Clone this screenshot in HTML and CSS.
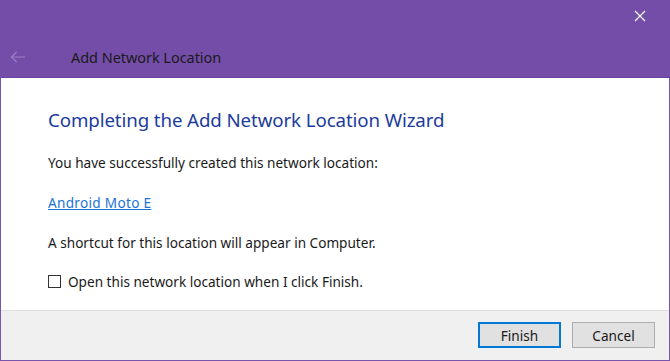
FILE: index.html
```html
<!DOCTYPE html>
<html>
<head>
<meta charset="utf-8">
<link rel="stylesheet" href="styles.css">
</head>
<body>
<div class="window">
  <header class="titlebar">
    <div class="topline">
      <svg class="close" width="12" height="12" viewBox="0 0 12 12"><path d="M1 1 L11 11 M11 1 L1 11" stroke="#fff" stroke-width="1.2" fill="none"/></svg>
    </div>
    <div class="navline">
      <svg class="back" width="16" height="12" viewBox="0 0 16 12"><path d="M15 6 H1.5 M6.5 1 L1.5 6 L6.5 11" stroke="#9a7fc6" stroke-width="1.2" fill="none"/></svg>
      <span class="title">Add Network Location</span>
    </div>
  </header>
  <main class="content">
    <h1 class="heading">Completing the Add Network Location Wizard</h1>
    <p class="text first">You have successfully created this network location:</p>
    <p class="text"><a class="link" href="#">Android Moto E</a></p>
    <p class="text">A shortcut for this location will appear in Computer.</p>
    <label class="check"><span class="box"></span><span>Open this network location when I click Finish.</span></label>
  </main>
  <footer class="footer">
    <button class="btn primary">Finish</button>
    <button class="btn">Cancel</button>
  </footer>
</div>
</body>
</html>
```
FILE: styles.css
```css
html, body { margin: 0; padding: 0; }
body { width: 670px; height: 361px; overflow: hidden; font-family: "Noto Sans", "Open Sans", sans-serif; }
.window {
  width: 670px; height: 361px; box-sizing: border-box;
  border: 1px solid #7a55ae; border-top: none;
  display: flex; flex-direction: column; background: #fff;
}
.titlebar { height: 77px; background: #744da9; border-bottom: 1px solid #6a45a0; margin: 0 -1px; display: flex; flex-direction: column; }
.topline { height: 36px; display: flex; justify-content: flex-end; align-items: flex-start; }
.close { margin: 10px 24px 0 0; }
.navline { display: flex; align-items: center; height: 40px; }
.back { margin-left: 10px; margin-top: 1px; }
.title { margin-left: 45px; font-size: 14.5px; color: #1a1a1a; margin-top: 1px; letter-spacing: -0.05px; }
.content { flex: 1; padding: 0 0 0 47px; }
.heading { font-weight: normal; font-size: 18.7px; color: #1c3b9c; margin: 29px 0 0 0; line-height: 26px; letter-spacing: -0.1px; }
.text { margin: 0; font-size: 13.6px; color: #1a1a1a; line-height: 19px; }
.text.first { margin-top: 20px; }
.text + .text { margin-top: 21px; }
.link { color: #1a73d6; text-decoration: underline; letter-spacing: 0.3px; }
.check { display: flex; align-items: center; margin-top: 20px; font-size: 13.6px; color: #1a1a1a; }
.box { width: 11px; height: 11px; border: 1px solid #333; margin-right: 7px; background: #fff; }
.footer {
  height: 50px; background: #f0f0f0; border-top: 1px solid #dfdfdf;
  display: flex; justify-content: flex-end; align-items: flex-start; gap: 11px; padding: 11px 14px 0 0; box-sizing: border-box;
}
.btn {
  width: 83px; height: 26px; box-sizing: border-box; background: #e1e1e1; border: 1px solid #adadad;
  font-family: inherit; font-size: 13.6px; color: #1a1a1a; padding: 0;
}
.btn.primary { border: 2px solid #0078d7; }
```
